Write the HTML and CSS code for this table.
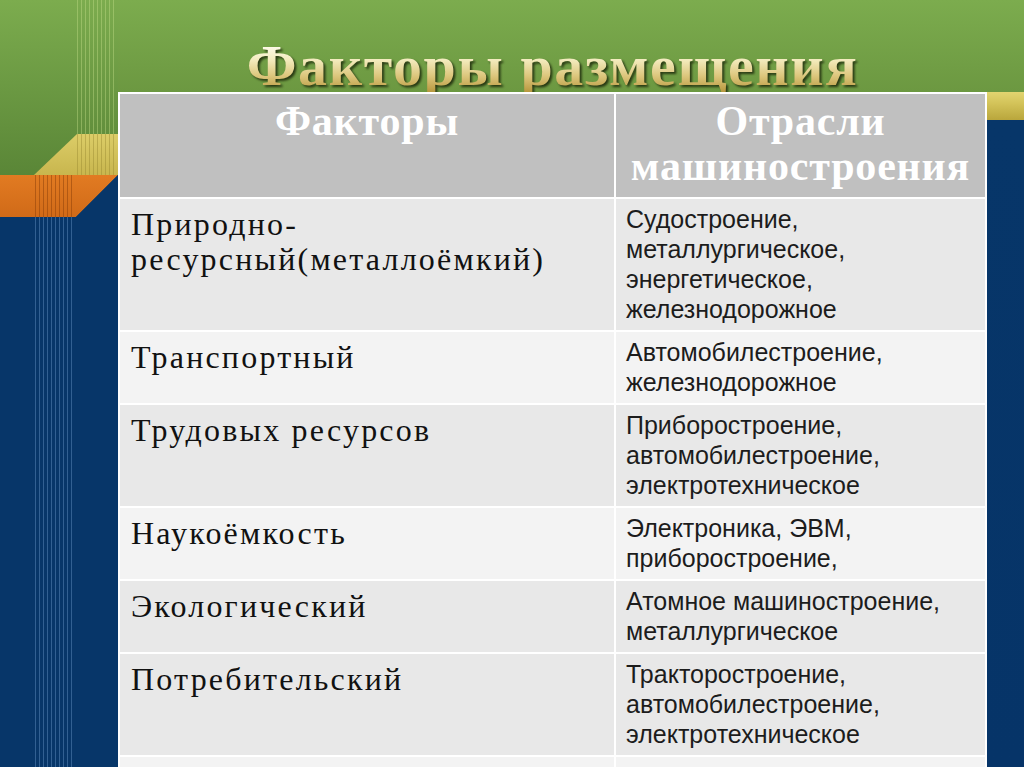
FILE: index.html
```html
<!DOCTYPE html>
<html lang="ru">
<head>
<meta charset="utf-8">
<title>Факторы размещения</title>
<link rel="stylesheet" href="styles.css">
</head>
<body>
<div class="slide">
  <svg class="deco" viewBox="0 0 118 767" width="118" height="767" aria-hidden="true">
    <defs>
      <linearGradient id="gGreen" x1="0" y1="0" x2="0" y2="175" gradientUnits="userSpaceOnUse">
        <stop offset="0" stop-color="#7cac4e"/>
        <stop offset="1" stop-color="#5a8637"/>
      </linearGradient>
      <linearGradient id="gYellow" x1="0" y1="134" x2="0" y2="175" gradientUnits="userSpaceOnUse">
        <stop offset="0" stop-color="#dccd68"/>
        <stop offset="1" stop-color="#c8b64e"/>
      </linearGradient>
      <linearGradient id="gOrange" x1="0" y1="175" x2="0" y2="217" gradientUnits="userSpaceOnUse">
        <stop offset="0" stop-color="#e27b22"/>
        <stop offset="1" stop-color="#d06a18"/>
      </linearGradient>
    </defs>
    <rect x="0" y="0" width="118" height="175" fill="url(#gGreen)"/>
    <polygon points="77,134 118,134 118,175 34,175" fill="url(#gYellow)"/>
    <polygon points="0,175 118,175 76,217 0,217" fill="url(#gOrange)"/>
    <polygon points="118,175 118,767 0,767 0,217 76,217" fill="#073669"/>
    <path d="M77.5 0V134M81.5 0V134M85.5 0V134M89.5 0V134M93.5 0V134M97.5 0V134M101.5 0V134M105.5 0V134M109.5 0V134M113.5 0V134" stroke="#c9e08c" stroke-opacity="0.4" stroke-width="1"/>
    <path d="M77.5 134V175M81.5 134V175M85.5 134V175M89.5 134V175M93.5 134V175M97.5 134V175M101.5 134V175M105.5 134V175M109.5 134V175M113.5 134V175" stroke="#9a8a30" stroke-opacity="0.45" stroke-width="1"/>
    <path d="M35.5 175V217M39.5 175V217M43.5 175V217M47.5 175V217M51.5 175V217M55.5 175V217M59.5 175V217M63.5 175V217M67.5 175V217M71.5 175V217" stroke="#8a3e08" stroke-opacity="0.5" stroke-width="1"/>
    <path d="M35.5 217V767M39.5 217V767M43.5 217V767M47.5 217V767M51.5 217V767M55.5 217V767M59.5 217V767M63.5 217V767M67.5 217V767M71.5 217V767" stroke="#5d89bb" stroke-opacity="0.5" stroke-width="1"/>
  </svg>

  <main class="content">
    <h1 class="title">Факторы размещения</h1>
    <table class="tbl">
      <thead>
        <tr>
          <th class="c1">Факторы</th>
          <th class="c2">Отрасли<br>машиностроения</th>
        </tr>
      </thead>
      <tbody>
        <tr class="dark">
          <td class="c1">Природно-<br>ресурсный(металлоёмкий)</td>
          <td class="c2">Судостроение,<br>металлургическое,<br>энергетическое,<br>железнодорожное</td>
        </tr>
        <tr class="light">
          <td class="c1">Транспортный</td>
          <td class="c2">Автомобилестроение,<br>железнодорожное</td>
        </tr>
        <tr class="dark">
          <td class="c1">Трудовых ресурсов</td>
          <td class="c2">Приборостроение,<br>автомобилестроение,<br>электротехническое</td>
        </tr>
        <tr class="light">
          <td class="c1">Наукоёмкость</td>
          <td class="c2">Электроника, ЭВМ,<br>приборостроение,</td>
        </tr>
        <tr class="dark">
          <td class="c1">Экологический</td>
          <td class="c2">Атомное машиностроение,<br>металлургическое</td>
        </tr>
        <tr class="dark">
          <td class="c1">Потребительский</td>
          <td class="c2">Тракторостроение,<br>автомобилестроение,<br>электротехническое</td>
        </tr>
        <tr class="light empty">
          <td class="c1"></td>
          <td class="c2"></td>
        </tr>
      </tbody>
    </table>
  </main>

  <div class="side"></div>
</div>
</body>
</html>
```

FILE: styles.css
```css
html, body {
  margin: 0;
  padding: 0;
}

body {
  background: #073669;
}

.slide {
  width: 1024px;
  height: 767px;
  overflow: hidden;
  display: grid;
  grid-template-columns: 118px 869px 37px;
  background: linear-gradient(to bottom,
    #7cac4e 0px,
    #6c9841 92px,
    #e2d470 92px,
    #d2c258 104px,
    #b9a63c 120px,
    #073669 120px,
    #063468 767px);
}

.deco {
  display: block;
  width: 118px;
  height: 767px;
}

.content {
  display: flex;
  flex-direction: column;
  min-width: 0;
}

.title {
  margin: 0;
  height: 92px;
  box-sizing: border-box;
  padding-top: 37px;
  font-family: "Liberation Serif", "DejaVu Serif", serif;
  font-weight: bold;
  font-size: 58px;
  line-height: 58px;
  letter-spacing: 1.6px;
  text-align: center;
  white-space: nowrap;
  color: transparent;
  background: linear-gradient(to bottom,
    #fffdf0 44px,
    #f3ebbd 60px,
    #dcc67c 76px,
    #b8983e 92px);
  -webkit-background-clip: text;
  background-clip: text;
  filter: drop-shadow(2px 2px 1px rgba(28, 40, 10, 0.85));
}

.tbl {
  position: relative;
  z-index: 1;
  width: 869px;
  border-collapse: collapse;
  table-layout: fixed;
  border: 2px solid #eef3e4;
}

.tbl th.c1 {
  width: 486px;
}

.tbl th,
.tbl td {
  border: 2px solid #ffffff;
  vertical-align: top;
  text-align: left;
}

.tbl th {
  background: #c0c0c0;
  color: #ffffff;
  font-family: "Liberation Serif", "DejaVu Serif", serif;
  font-weight: bold;
  font-size: 42px;
  line-height: 45px;
  letter-spacing: 0.8px;
  text-align: center;
  padding: 5px 4px 8px;
  height: 90px;
}

.tbl td.c1 {
  font-family: "Liberation Serif", "DejaVu Serif", serif;
  font-size: 32px;
  line-height: 35px;
  letter-spacing: 2.2px;
  color: #111111;
  padding: 8px 4px 4px 11px;
}

.tbl td.c2 {
  font-family: "Liberation Sans", Arial, sans-serif;
  font-size: 25px;
  line-height: 30px;
  color: #1c1c1c;
  padding: 5px 4px 6px 10px;
  white-space: nowrap;
}

.tbl tr.dark td {
  background: #e8e8e8;
}

.tbl tr.light td {
  background: #f3f3f3;
}

.tbl tr.empty td {
  height: 40px;
}
```
